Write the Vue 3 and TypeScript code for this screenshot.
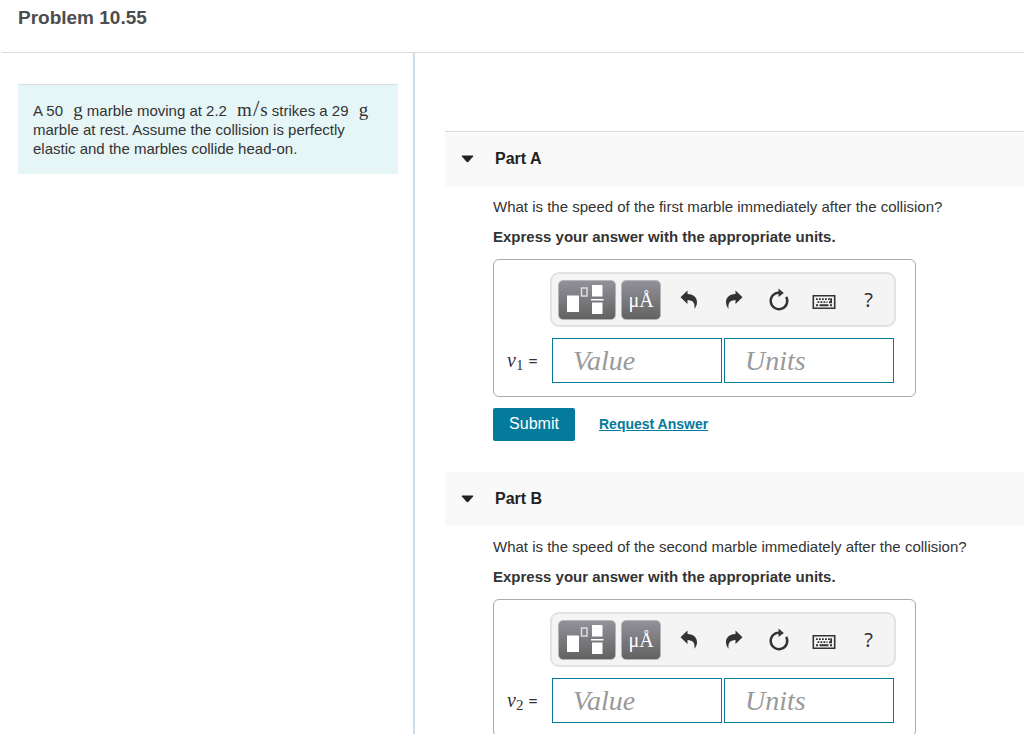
<script setup lang="ts">
import { reactive } from 'vue'

interface Part {
  id: string
  title: string
  question: string
  subscript: string
  value: string
  units: string
  submittable: boolean
}

const parts = reactive<Part[]>([
  {
    id: 'a',
    title: 'Part A',
    question: 'What is the speed of the first marble immediately after the collision?',
    subscript: '1',
    value: '',
    units: '',
    submittable: true,
  },
  {
    id: 'b',
    title: 'Part B',
    question: 'What is the speed of the second marble immediately after the collision?',
    subscript: '2',
    value: '',
    units: '',
    submittable: false,
  },
])
</script>

<template>
  <div class="page">
    <header class="page-header">
      <h1>Problem 10.55</h1>
    </header>
    <div class="columns">
      <aside class="intro">
        <p class="statement">
          A 50 <span class="unit">g</span> marble moving at 2.2
          <span class="unit">m<span class="slash">/</span>s</span> strikes a 29 <span class="unit">g</span>
          marble at rest. Assume the collision is perfectly elastic and the marbles collide head-on.
        </p>
      </aside>
      <main class="parts">
        <section v-for="part in parts" :key="part.id" class="part">
          <h2 class="part-header">
            <button type="button" class="part-toggle" aria-expanded="true">
              <svg class="caret" viewBox="0 0 12 8" aria-hidden="true">
                <path d="M0.6 0.5h10.8q0.6 0.4 0.2 1L7.2 6.6Q6 7.8 4.8 6.6L0.4 1.5Q0 0.9 0.6 0.5z" />
              </svg>
              {{ part.title }}
            </button>
          </h2>
          <div class="part-body">
            <p class="question">{{ part.question }}</p>
            <p class="hint">Express your answer with the appropriate units.</p>
            <form class="answer" @submit.prevent>
              <div class="answer-box">
                <div class="toolbar">
                  <button type="button" class="palette templates" aria-label="Templates">
                    <svg viewBox="0 0 56 38" aria-hidden="true">
                      <path class="solid" d="M8 14.500h12v16.500H8zM33 4h10.500v11.500H33zM33 21.500h10.500V33H33zM32 18h12.500v1.500H32z" />
                      <path class="box-outline" d="M22.500 7h5.500v8h-5.500z" />
                    </svg>
                  </button>
                  <button type="button" class="palette symbols" aria-label="Symbols">μÅ</button>
                  <button type="button" class="tool" aria-label="Undo">
                    <svg viewBox="0 0 24 24" aria-hidden="true">
                      <path d="M3.500 9.200 10.500 2.500V6c6.500.2 9.500 3.600 9.500 8.200 0 2.400-.8 4.400-2.600 6.600.8-5.600-1.400-8.500-6.900-8.700v4z" />
                    </svg>
                  </button>
                  <button type="button" class="tool" aria-label="Redo">
                    <svg viewBox="0 0 24 24" aria-hidden="true">
                      <path d="M20.500 9.200 13.500 2.500V6C7 6.200 4 9.600 4 14.200c0 2.400.8 4.400 2.600 6.600-.8-5.600 1.400-8.500 6.900-8.700v4z" />
                    </svg>
                  </button>
                  <button type="button" class="tool" aria-label="Reset">
                    <svg viewBox="0 0 24 24" aria-hidden="true">
                      <path class="line" d="M13.200 4.600H12A8.300 8.300 0 1 0 19.200 8.800" />
                      <path d="M11.500 0.500 16.800 4.900 11.500 9z" />
                    </svg>
                  </button>
                  <button type="button" class="tool" aria-label="Keyboard shortcuts">
                    <svg viewBox="0 0 24 24" aria-hidden="true">
                      <path class="frame" d="M1.300 7.800h21.400v12.400H1.300z" />
                      <path class="keys" d="M4 11.200h14M5.500 14.200h10" />
                      <path d="M4 16.200h2v2H4zM7.500 16.200h9v2h-9zM18 16.200h2v2h-2zM18.200 10.200H20v5h-3v-2h1.200z" />
                    </svg>
                  </button>
                  <button type="button" class="tool help" aria-label="Help">?</button>
                </div>
                <div class="entry">
                  <label class="variable" :for="`value-${part.id}`">
                    <i>v</i><sub>{{ part.subscript }}</sub> <b>=</b>
                  </label>
                  <input :id="`value-${part.id}`" v-model="part.value" type="text" placeholder="Value" />
                  <input v-model="part.units" type="text" placeholder="Units" aria-label="Units" />
                </div>
              </div>
              <div v-if="part.submittable" class="actions">
                <button type="submit" class="submit">Submit</button>
                <a href="#" class="request">Request Answer</a>
              </div>
            </form>
          </div>
        </section>
      </main>
    </div>
  </div>
</template>

<style>
body {
  margin: 0;
  background: #fff;
}
</style>

<style scoped>
.page {
  display: flex;
  flex-direction: column;
  height: 100vh;
  overflow: hidden;
  font-family: "Liberation Sans", Arial, sans-serif;
  font-size: 15px;
  color: #333;
}
.page * {
  box-sizing: border-box;
}
h1,
h2,
p {
  margin: 0;
}
button {
  padding: 0;
  border: 0;
  font-family: inherit;
  cursor: pointer;
}
.page-header {
  flex: none;
  margin-left: 2px;
  padding: 8px 16px 24px;
  border-bottom: 1px solid #ddd;
}
h1 {
  font-size: 19px;
  line-height: 20px;
  color: #4d4d4d;
}
.columns {
  flex: 1;
  display: flex;
  min-height: 0;
}
.intro {
  flex: 0 0 415px;
  padding: 31px 15px 0 18px;
  border-right: 2px solid #cddceb;
}
.statement {
  padding: 16px 15px;
  border-top: 1px solid #ddd;
  background: #e6f6f7;
  line-height: 19px;
}
.unit {
  margin-left: 6px;
  font-family: "Liberation Serif", serif;
  font-size: 19px;
  line-height: 1px;
}
.slash {
  padding: 0 1px;
  font-size: 23px;
  line-height: 1px;
}
.parts {
  flex: 1;
  min-width: 0;
  padding: 78px 0 0 30px;
  overflow: hidden;
}
.part {
  margin-bottom: 31px;
}
.part-header {
  background: #f9f9f9;
  font-size: 16px;
}
.part:first-child .part-header {
  border-top: 1px solid #ddd;
}
.part-toggle {
  display: flex;
  align-items: center;
  gap: 21px;
  width: 100%;
  height: 54px;
  padding-left: 16px;
  background: none;
  font-size: 16px;
  font-weight: bold;
  color: #222;
}
.caret {
  width: 13px;
  height: 8px;
  fill: #222;
}
.part-body {
  padding: 11px 16px 0 48px;
}
.question,
.hint {
  line-height: 20px;
}
.hint {
  margin-top: 10px;
  font-weight: bold;
}
.answer-box {
  width: 423px;
  max-width: 100%;
  margin-top: 12px;
  padding: 12px 19px 13px 13px;
  border: 1px solid #aaa;
  border-radius: 6px;
}
.toolbar {
  display: flex;
  align-items: center;
  height: 55px;
  margin-left: 43px;
  padding-left: 6px;
  border: 2px solid #e2e2e2;
  border-radius: 9px;
  background: #f4f4f4;
}
.palette {
  height: 40px;
  margin-right: 5px;
  border: 1px solid #b5b5b5;
  border-radius: 5px;
  background: linear-gradient(#92919a, #626262);
  color: #fff;
}
.templates {
  width: 58px;
}
.templates svg {
  display: block;
  width: 100%;
}
.solid {
  fill: #fff;
}
.box-outline {
  fill: none;
  stroke: #ddd;
  stroke-width: 1.5;
}
.symbols {
  width: 40px;
  padding-top: 2px;
  font-family: "Liberation Serif", serif;
  font-size: 20px;
}
.tool {
  display: flex;
  align-items: center;
  justify-content: center;
  width: 45px;
  height: 40px;
  background: none;
  color: #333;
}
.tool svg {
  width: 24px;
  height: 24px;
  fill: #333;
}
.tool .line {
  fill: none;
  stroke: #333;
  stroke-width: 2.4;
}
.tool .frame {
  fill: none;
  stroke: #333;
  stroke-width: 1.6;
}
.tool .keys {
  fill: none;
  stroke: #333;
  stroke-width: 1.8;
  stroke-dasharray: 1.8 1.2;
}
.help {
  font-family: "Noto Sans", sans-serif;
  font-size: 20px;
}
.entry {
  display: flex;
  align-items: center;
  gap: 2px;
  margin-top: 11px;
  margin-right: 2px;
}
.variable {
  flex: 0 0 43px;
  font-family: "Liberation Serif", serif;
  font-size: 20px;
  line-height: 24px;
  white-space: nowrap;
}
.variable sub {
  font-size: 15px;
  line-height: 1px;
  vertical-align: -3px;
}
.variable b {
  font-size: 16px;
}
input {
  flex: 1;
  min-width: 0;
  height: 45px;
  margin: 0;
  padding: 0 20px;
  border: 1px solid #057a9b;
  background: #fff;
  font-family: "Liberation Serif", serif;
  font-size: 28px;
  color: #333;
}
input::placeholder {
  font-style: italic;
  color: #999;
  opacity: 1;
}
.actions {
  display: flex;
  align-items: center;
  gap: 24px;
  margin-top: 11px;
}
.submit {
  width: 82px;
  height: 33px;
  padding-bottom: 2px;
  border-radius: 2px;
  background: #047a9c;
  font-size: 16px;
  color: #fff;
}
.request {
  padding-bottom: 2px;
  font-size: 14px;
  font-weight: bold;
  color: #047a9c;
}
</style>
